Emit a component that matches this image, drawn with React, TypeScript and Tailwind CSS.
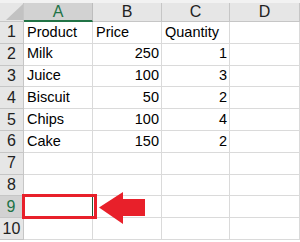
const cols = ["A", "B", "C", "D"];

const rows: (string | number)[][] = [
  ["Product", "Price", "Quantity", ""],
  ["Milk", 250, 1, ""],
  ["Juice", 100, 3, ""],
  ["Biscuit", 50, 2, ""],
  ["Chips", 100, 4, ""],
  ["Cake", 150, 2, ""],
  ["", "", "", ""],
  ["", "", "", ""],
  ["", "", "", ""],
  ["", "", "", ""],
];

const App = () => {
  return (
    <div
      className="relative w-[300px] h-[242px] overflow-hidden bg-white"
      style={{ fontFamily: '"Liberation Sans", Arial, sans-serif' }}
    >
      <div className="h-[3px] bg-[#f2f2f2]" />
      <div className="grid grid-cols-[24px_69px_69px_68px_1fr]">
        {/* corner */}
        <div className="relative h-[19px] bg-[#e6e6e6] border-r border-b border-[#c6c6c6]">
          <svg className="absolute left-[6px] top-[1px]" width="17" height="16" viewBox="0 0 17 16">
            <polygon points="17,0 17,16 0,16" fill="#c2c2c2" />
          </svg>
        </div>
        {cols.map((c) =>
          c === "A" ? (
            <div
              key={c}
              className="h-[19px] flex items-center justify-center bg-[#d2d2d2] border-r border-[#bdbdbd] border-b-2 border-b-[#217346] text-[16px] text-[#217346]"
            >
              {c}
            </div>
          ) : (
            <div
              key={c}
              className="h-[19px] flex items-center justify-center bg-[#e6e6e6] border-r border-b border-[#c6c6c6] text-[16px] text-[#222]"
            >
              {c}
            </div>
          )
        )}

        {rows.map((r, i) => (
          <div key={i} className="contents">
            <div
              className={
                i === 8
                  ? "h-[21.8px] flex items-center justify-center bg-[#d2d2d2] border-r-2 border-r-[#217346] border-b border-[#c6c6c6] text-[16px] text-[#217346]"
                  : "h-[21.8px] flex items-center justify-center bg-[#e6e6e6] border-r border-b border-[#c6c6c6] text-[16px] text-[#222]"
              }
            >
              {i + 1}
            </div>
            {r.map((v, j) => (
              <div
                key={j}
                className={
                  typeof v === "number"
                    ? "h-[21.8px] flex items-center justify-end pr-[2px] border-r border-b border-[#dadada] text-[14.5px] text-black"
                    : "h-[21.8px] flex items-center pl-[3px] border-r border-b border-[#dadada] text-[14.5px] text-black"
                }
              >
                {v}
              </div>
            ))}
          </div>
        ))}
      </div>

      {/* selected cell marker */}
      <div className="absolute left-[22px] top-[194px] w-[75px] h-[25px] border-[3px] border-[#e8202a]">
        <div className="absolute right-[1px] top-0 bottom-0 w-px bg-[#1e5a36]" />
      </div>

      {/* arrow */}
      <svg className="absolute left-[98px] top-[191px]" width="48" height="34" viewBox="0 0 48 34">
        <polygon points="1,16.5 25,1 25,8 47,8 47,25 25,25 25,33" fill="#e8202a" />
      </svg>
    </div>
  );
};

export default App;
